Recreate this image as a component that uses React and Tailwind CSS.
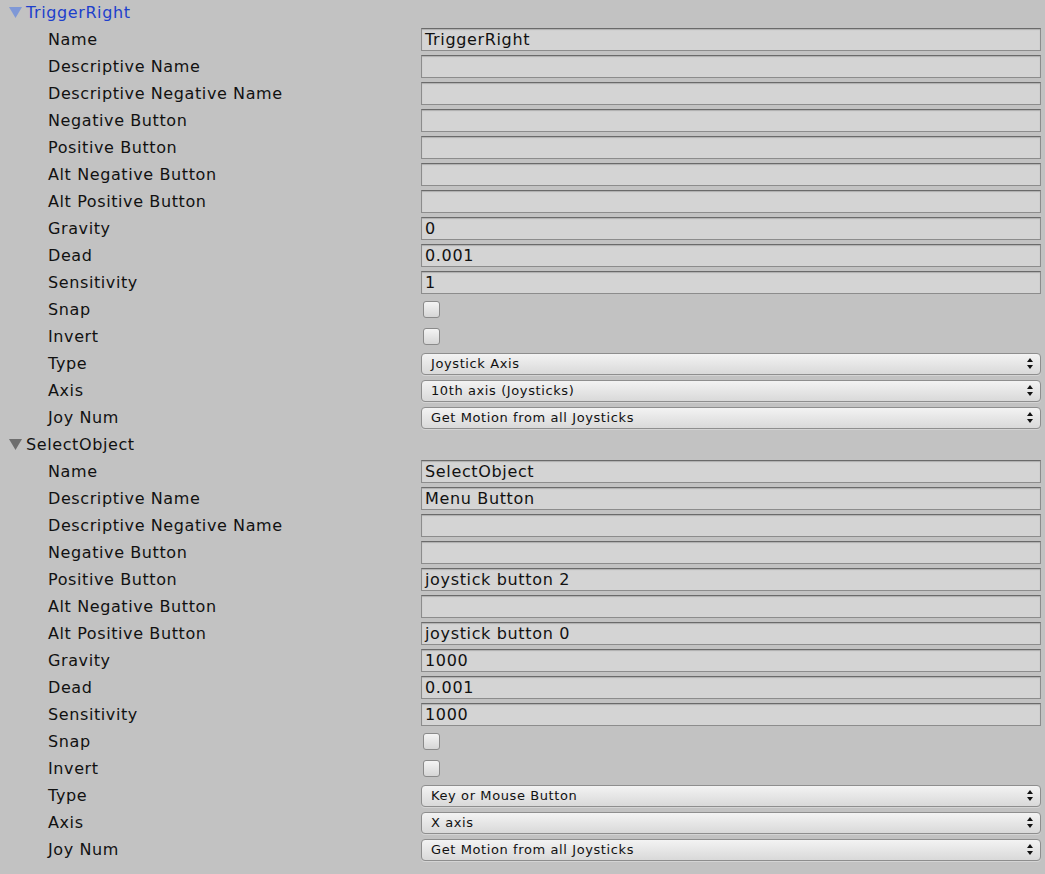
import React from "react";

const font = { fontFamily: '"DejaVu Sans", Verdana, sans-serif' };

function Arrows() {
  return (
    <svg width="6" height="11" viewBox="0 0 6 11" className="shrink-0">
      <path d="M3 0 L6 4 L0 4 Z" fill="#111" />
      <path d="M3 11 L6 7 L0 7 Z" fill="#111" />
    </svg>
  );
}

function TextField({ value }) {
  return (
    <div className="h-[23px] w-full border border-[#8c8c8c] border-t-[#6a6a6a] bg-[#d4d4d4] shadow-[inset_0_1px_1px_rgba(0,0,0,0.18)] flex items-center pl-[3px] text-[16px] tracking-[0.65px] text-[#111] whitespace-nowrap overflow-hidden">
      {value}
    </div>
  );
}

function Checkbox() {
  return (
    <div className="ml-[2px] w-[17px] h-[17px] rounded-[3px] border border-[#8a8a8a] bg-gradient-to-b from-[#f4f4f4] to-[#d6d6d6]" />
  );
}

function Dropdown({ value }) {
  return (
    <div className="h-[22px] w-full rounded-[4px] border border-[#8e8e8e] bg-gradient-to-b from-[#f3f3f3] to-[#d9d9d9] flex items-center justify-between pl-[9px] pr-[7px] text-[13px] tracking-[0.6px] text-[#111] whitespace-nowrap shadow-[0_1px_0_rgba(255,255,255,0.3)]">
      <span>{value}</span>
      <Arrows />
    </div>
  );
}

function Row({ label, children }) {
  return (
    <div className="h-[27px] flex items-center">
      <div className="w-[421px] shrink-0 pl-[48px] text-[16px] tracking-[0.6px] text-[#111] whitespace-nowrap">{label}</div>
      <div className="flex-1 mr-[4px] flex items-center">{children}</div>
    </div>
  );
}

function Section({ name, active, data }) {
  return (
    <div>
      <div className="h-[27px] flex items-center pl-[9px]">
        <svg width="13" height="11" viewBox="0 0 13 11" className="shrink-0">
          <path d="M0 0 L13 0 L6.5 11 Z" fill={active ? "#7f98d6" : "#6e6e6e"} />
        </svg>
        <span className={`ml-[4px] text-[16px] tracking-[0.6px] ${active ? "text-[#1d3fcc]" : "text-[#111]"}`}>{name}</span>
      </div>
      <Row label="Name"><TextField value={data.name} /></Row>
      <Row label="Descriptive Name"><TextField value={data.desc} /></Row>
      <Row label="Descriptive Negative Name"><TextField value="" /></Row>
      <Row label="Negative Button"><TextField value="" /></Row>
      <Row label="Positive Button"><TextField value={data.pos} /></Row>
      <Row label="Alt Negative Button"><TextField value="" /></Row>
      <Row label="Alt Positive Button"><TextField value={data.altPos} /></Row>
      <Row label="Gravity"><TextField value={data.gravity} /></Row>
      <Row label="Dead"><TextField value="0.001" /></Row>
      <Row label="Sensitivity"><TextField value={data.sens} /></Row>
      <Row label="Snap"><Checkbox /></Row>
      <Row label="Invert"><Checkbox /></Row>
      <Row label="Type"><Dropdown value={data.type} /></Row>
      <Row label="Axis"><Dropdown value={data.axis} /></Row>
      <Row label="Joy Num"><Dropdown value="Get Motion from all Joysticks" /></Row>
    </div>
  );
}

export default function App() {
  return (
    <div className="w-[1045px] h-[874px] bg-[#c2c2c2] overflow-hidden" style={font}>
      <div className="-mt-[1px]">
        <Section
          name="TriggerRight"
          active
          data={{ name: "TriggerRight", desc: "", pos: "", altPos: "", gravity: "0", sens: "1", type: "Joystick Axis", axis: "10th axis (Joysticks)" }}
        />
        <Section
          name="SelectObject"
          data={{ name: "SelectObject", desc: "Menu Button", pos: "joystick button 2", altPos: "joystick button 0", gravity: "1000", sens: "1000", type: "Key or Mouse Button", axis: "X axis" }}
        />
      </div>
    </div>
  );
}
